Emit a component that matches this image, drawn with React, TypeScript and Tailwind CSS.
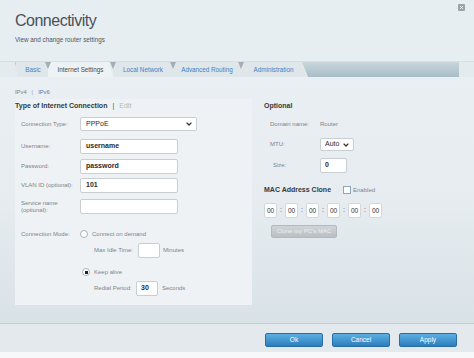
import React from "react";

const Tri = () => (
  <div className="w-0 h-0 border-l-[3px] border-r-[3px] border-t-[7px] border-l-transparent border-r-transparent border-t-[#a3afb7] -mx-[3px] z-10 self-start" />
);

const Input = ({ w, value }: { w: string; value?: string }) => (
  <div className={`${w} h-[15px] bg-white border border-[#c9ced3] rounded-[2px] flex items-center pl-[5px] text-[7px] font-bold text-[#2b2b2b]`}>
    {value}
  </div>
);

const Chevron = () => (
  <svg width="6" height="4" viewBox="0 0 6 4" className="ml-auto mr-[4px]">
    <path d="M0.6 0.6 L3 3 L5.4 0.6" stroke="#333" strokeWidth="1.3" fill="none" />
  </svg>
);

export default function App() {
  const label = "text-[6px] text-[#7d838a]";
  return (
    <div className="w-[474px] h-[358px] flex flex-col bg-[#e4ebef] overflow-hidden" style={{ fontFamily: '"Liberation Sans", Arial, sans-serif' }}>
      {/* header */}
      <div className="relative h-[62px] shrink-0 bg-[#e7eef2] px-[15px] pt-[11px] border-b border-[#d6dfe4]">
        <div className="text-[16px] leading-[20px] tracking-[-0.5px] text-[#4c5157]">Connectivity</div>
        <div className="mt-[4px] text-[6.3px] text-[#50565c]">View and change router settings</div>
        <div className="absolute right-[9px] top-[4px] w-[7px] h-[7px] bg-[#9aa3aa] rounded-[1px] flex items-center justify-center">
          <svg width="5" height="5" viewBox="0 0 5 5"><path d="M1 1 L4 4 M4 1 L1 4" stroke="#eef1f3" strokeWidth="0.9" /></svg>
        </div>
      </div>
      {/* tabs */}
      <div className="h-[15px] shrink-0 flex px-[15px] text-[6.3px]">
        <div className="w-[33px] h-full bg-[#e0e7eb] flex items-center justify-center text-[#3f7fc4] pl-[2px] [clip-path:polygon(0_0,100%_0,100%_100%,3px_100%)] border-l border-[#b9c3c9]">Basic</div>
        <Tri />
        <div className="w-[65px] h-full bg-[#edf2f4] flex items-center justify-center text-[#444a50] [clip-path:polygon(0_0,calc(100%-4px)_0,100%_100%,0_100%)]">Internet Settings</div>
        <Tri />
        <div className="w-[60px] h-full bg-[#e0e7eb] flex items-center justify-center text-[#3f7fc4]">Local Network</div>
        <Tri />
        <div className="w-[68px] h-full bg-[#e0e7eb] flex items-center justify-center text-[#3f7fc4]">Advanced Routing</div>
        <Tri />
        <div className="w-[65px] h-full bg-[#e0e7eb] flex items-center justify-center text-[#3f7fc4] [clip-path:polygon(0_0,calc(100%-4px)_0,100%_100%,0_100%)]">Administration</div>
        <div className="w-[157px] -ml-[4px] h-full bg-gradient-to-b from-[#c9d6dc] to-[#a9bdc7] [clip-path:polygon(0_0,100%_0,100%_100%,6px_100%)]" />
      </div>
      {/* content */}
      <div className="h-[246px] shrink-0 flex bg-gradient-to-b from-[#e9eff2] via-[#e6ecf0] to-[#d9e2e7]">
        {/* left */}
        <div className="w-[252px] shrink-0 pl-[15px] pt-[11px] flex flex-col">
          <div className="h-[8px] flex items-center text-[5.8px] text-[#7a8087]">
            <span>IPv4</span>
            <span className="mx-[5px] text-[#9aa0a6]">|</span>
            <span className="text-[#3f7fc4]">IPv6</span>
          </div>
          <div className="mt-[3px] w-[237px] h-[206px] bg-[#eef2f4] flex flex-col">
            <div className="h-[14px] flex items-center text-[7px] font-bold text-[#34393e]">
              <span>Type of Internet Connection</span>
              <span className="mx-[5px] font-normal text-[#555]">|</span>
              <span className="font-normal text-[#b3b8bc]">Edit</span>
            </div>
            <div className="pl-[6px] flex flex-col">
              <div className="mt-[4px] h-[14px] flex items-center">
                <div className={`w-[59px] ${label}`}>Connection Type:</div>
                <div className="w-[117px] h-[14px] bg-white border border-[#c9ced3] rounded-[2px] flex items-center pl-[5px] text-[7px] text-[#2b2b2b]">
                  PPPoE
                  <Chevron />
                </div>
              </div>
              <div className="mt-[8px] h-[15px] flex items-center">
                <div className={`w-[59px] ${label}`}>Username:</div>
                <Input w="w-[98px]" value="username" />
              </div>
              <div className="mt-[5px] h-[15px] flex items-center">
                <div className={`w-[59px] ${label}`}>Password:</div>
                <Input w="w-[98px]" value="password" />
              </div>
              <div className="mt-[4px] h-[15px] flex items-center">
                <div className={`w-[59px] ${label}`}>VLAN ID (optional):</div>
                <Input w="w-[98px]" value="101" />
              </div>
              <div className="mt-[6px] h-[15px] flex items-center">
                <div className={`w-[59px] ${label} leading-[7px]`}>Service name<br />(optional):</div>
                <Input w="w-[98px]" />
              </div>
              <div className="mt-[14px] h-[12px] flex items-center">
                <div className={`w-[59px] ${label}`}>Connection Mode:</div>
                <div className="w-[8px] h-[8px] rounded-full border border-[#a9b0b6] bg-white" />
                <div className={`ml-[4px] ${label}`}>Connect on demand</div>
              </div>
              <div className="mt-[3px] h-[15px] flex items-center pl-[73px]">
                <div className={`w-[44px] ${label}`}>Max Idle Time:</div>
                <div className="w-[22px] h-[15px] bg-white border border-[#c9ced3] rounded-[2px]" />
                <div className={`ml-[3px] ${label}`}>Minutes</div>
              </div>
              <div className="mt-[8px] h-[12px] flex items-center pl-[61px]">
                <div className="w-[8px] h-[8px] rounded-full border border-[#a9b0b6] bg-white flex items-center justify-center">
                  <div className="w-[3px] h-[3px] bg-[#222]" />
                </div>
                <div className={`ml-[4px] ${label}`}>Keep alive</div>
              </div>
              <div className="mt-[3px] h-[15px] flex items-center pl-[73px]">
                <div className={`w-[42px] ${label}`}>Redial Period:</div>
                <div className="w-[22px] h-[15px] bg-white border border-[#c9ced3] rounded-[2px] flex items-center pl-[4px] text-[7px] font-bold text-[#2b2b2b]">30</div>
                <div className={`ml-[4px] ${label}`}>Seconds</div>
              </div>
            </div>
          </div>
        </div>
        {/* right */}
        <div className="flex-1 pl-[12px] pt-[22px] flex flex-col">
          <div className="h-[14px] flex items-center text-[7px] font-bold text-[#34393e]">Optional</div>
          <div className="pl-[6px] flex flex-col">
            <div className="mt-[4px] h-[14px] flex items-center">
              <div className={`w-[50px] ${label}`}>Domain name:</div>
              <div className={label}>Router</div>
            </div>
            <div className="mt-[7px] h-[13px] flex items-center">
              <div className={`w-[50px] ${label}`}>MTU:</div>
              <div className="w-[34px] h-[13px] bg-white border border-[#c9ced3] rounded-[2px] flex items-center pl-[4px] text-[7px] text-[#2b2b2b]">
                Auto
                <Chevron />
              </div>
            </div>
            <div className="mt-[7px] h-[15px] flex items-center">
              <div className={`w-[50px] pl-[3px] ${label}`}>Size:</div>
              <div className="w-[27px] h-[15px] bg-white border border-[#c9ced3] rounded-[2px] flex items-center pl-[4px] text-[7px] font-bold text-[#2b2b2b]">0</div>
            </div>
          </div>
          <div className="mt-[11px] h-[12px] flex items-center">
            <div className="text-[7px] font-bold text-[#34393e]">MAC Address Clone</div>
            <div className="ml-[12px] w-[8px] h-[8px] border border-[#8fa5b8] bg-white" />
            <div className={`ml-[2px] ${label}`}>Enabled</div>
          </div>
          <div className="mt-[7px] flex items-center">
            {["00", "00", "00", "00", "00", "00"].map((v, i) => (
              <React.Fragment key={i}>
                {i > 0 && <div className="w-[8px] text-center text-[7px] text-[#555]">:</div>}
                <div className="w-[13px] h-[15px] bg-white border border-[#d3d8dc] rounded-[2px] flex items-center justify-center text-[6.5px] text-[#333]">{v}</div>
              </React.Fragment>
            ))}
          </div>
          <div className="mt-[7px] ml-[7px] w-[66px] h-[13px] rounded-[2px] bg-gradient-to-b from-[#cfd4d8] to-[#b9bfc4] border border-[#b3b9be] flex items-center justify-center text-[6px] text-[#eef0f2]">
            Clone my PC's MAC
          </div>
        </div>
      </div>
      {/* footer */}
      <div className="h-[29px] shrink-0 border-t border-[#c4cdd3] bg-[#e3e9ed] flex items-center justify-end pr-[17px] gap-[9px] pt-[3px]">
        {["Ok", "Cancel", "Apply"].map((b) => (
          <div key={b} className="w-[58px] h-[14px] rounded-[2px] bg-gradient-to-b from-[#5cb0e3] to-[#2c7dbd] border border-[#2a6da5] flex items-center justify-center text-[6.5px] text-white">
            {b}
          </div>
        ))}
      </div>
      <div className="flex-1 bg-[#f6f8f9]" />
    </div>
  );
}
